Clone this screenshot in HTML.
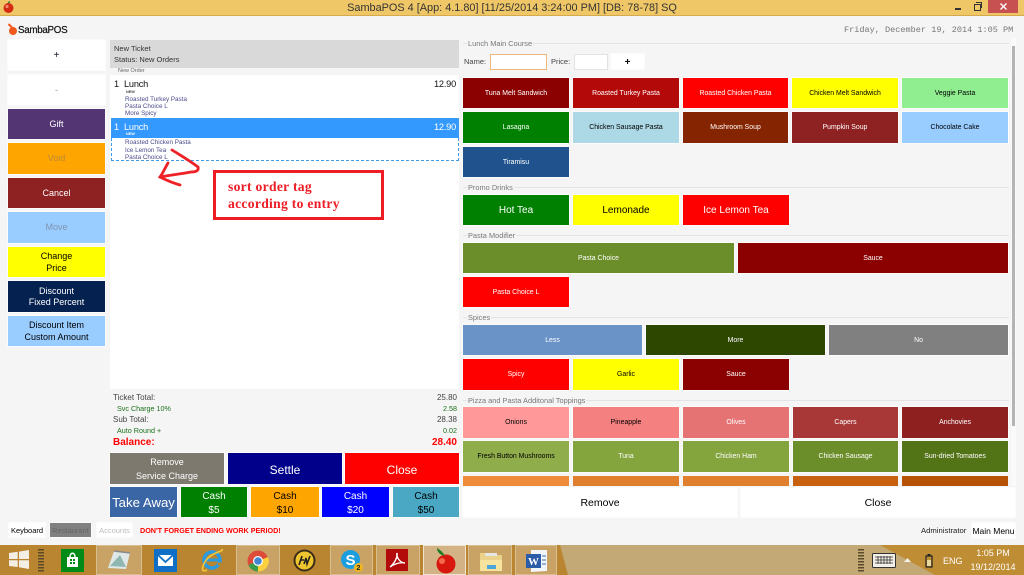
<!DOCTYPE html>
<html><head><meta charset="utf-8">
<style>
html,body{margin:0;padding:0;width:1024px;height:575px;overflow:hidden;background:#f5f5f5;font-family:"Liberation Sans",sans-serif}
.a{position:absolute;white-space:nowrap}
.b{position:absolute;display:flex;align-items:center;justify-content:center;text-align:center;font-size:6.9px;color:#fff;box-sizing:border-box;line-height:1.25;outline:1px solid #fbfbfb;padding-top:2px}
.l{font-size:9px;line-height:11.5px;padding-top:1px}
.m{font-size:10px;padding-top:1px}
.k{color:#000}
.g{position:absolute;height:1px;background:#e4e4e4;left:463px;width:546px}
.h{position:absolute;left:467px;font-size:7.4px;color:#777;background:#f5f5f5;padding:0 1px;white-space:nowrap;line-height:9px}
.t{position:absolute;left:125px;font-size:6.3px;color:#4a4a8c;line-height:8px;white-space:nowrap}
.n{position:absolute;left:126px;font-size:3.8px;font-weight:bold;color:#444;line-height:5px}
.o{font-size:9.2px;line-height:12px;letter-spacing:-.2px;top:78px}
.c{font-size:10px;line-height:13.5px;padding-top:3px}
</style></head><body>

<!-- title bar -->
<div class="a" style="left:0;top:0;width:1024px;height:15px;background:#f0c767;border-bottom:1px solid #d5a94e"></div>
<svg class="a" style="left:2px;top:1px" width="13" height="13" viewBox="0 0 13 13"><circle cx="6.5" cy="7" r="5" fill="#d42a12"/><circle cx="5" cy="5.5" r="1.6" fill="#f58a6a"/><path d="M6 2L8 0.5" stroke="#274" stroke-width="1.2"/></svg>
<div class="a" style="left:0;width:1024px;top:1px;text-align:center;font-size:10.9px;line-height:15px;color:#333">SambaPOS 4 [App: 4.1.80] [11/25/2014 3:24:00 PM] [DB: 78-78] SQ</div>
<div class="a" style="left:955px;top:8px;width:6px;height:2px;background:#333"></div>
<div class="a" style="left:974px;top:4px;width:5px;height:5px;border:1px solid #333"></div>
<div class="a" style="left:976px;top:2px;width:5px;height:5px;border:1px solid #333;border-left:0;border-bottom:0"></div>
<div class="a" style="left:988px;top:0;width:30px;height:13px;background:#c75050"></div>
<svg class="a" style="left:999px;top:2px" width="9" height="9" viewBox="0 0 9 9"><path d="M1.5 1.5L7.5 7.5M7.5 1.5L1.5 7.5" stroke="#fff" stroke-width="1.4"/></svg>

<!-- logo + clock -->
<svg class="a" style="left:7px;top:23px" width="11" height="13" viewBox="0 0 11 13"><circle cx="6" cy="8" r="4" fill="#f0591e"/><path d="M1.5 1L5 4.5" stroke="#f0591e" stroke-width="2"/></svg>
<div class="a" style="left:18px;top:25px;font-size:9.8px;line-height:12px;color:#111;letter-spacing:-.3px;-webkit-text-stroke:.2px #111">SambaPOS</div>
<div class="a" style="left:844px;top:25px;font-family:'Liberation Mono',monospace;font-size:8.55px;line-height:11px;color:#777">Friday, December 19, 2014 1:05 PM</div>

<!-- left buttons -->
<div class="b" style="left:8px;top:40px;width:97px;height:30px;background:#fff;color:#112;font-size:10px;padding-top:3px">+</div>
<div class="b" style="left:8px;top:75px;width:97px;height:30px;background:#fff;color:#999;font-size:9px">-</div>
<div class="b l" style="left:8px;top:109px;width:97px;height:30px;background:#533573">Gift</div>
<div class="b l" style="left:8px;top:143px;width:97px;height:31px;background:#ffa500;color:#b98a3a">Void</div>
<div class="b l" style="left:8px;top:178px;width:97px;height:30px;background:#8e2222">Cancel</div>
<div class="b l" style="left:8px;top:212px;width:97px;height:31px;background:#99ccff;color:#7f94b0">Move</div>
<div class="b l k" style="left:8px;top:247px;width:97px;height:30px;background:#ff0">Change<br>Price</div>
<div class="b l" style="left:8px;top:281px;width:97px;height:31px;background:#04214f">Discount<br>Fixed Percent</div>
<div class="b l k" style="left:8px;top:316px;width:97px;height:30px;background:#99ccff">Discount Item<br>Custom Amount</div>

<!-- ticket header -->
<div class="a" style="left:110px;top:40px;width:349px;height:28px;background:#d9d9d9"></div>
<div class="a" style="left:114px;top:44px;font-size:7.5px;line-height:10.5px;color:#333">New Ticket<br>Status: New Orders</div>
<div class="a" style="left:118px;top:68px;font-size:5.5px;line-height:6px;color:#666">New Order</div>

<!-- ticket list -->
<div class="a" style="left:110px;top:75px;width:349px;height:314px;background:#fff"></div>
<div class="a o" style="left:114px;color:#111">1</div>
<div class="a o" style="left:124px;color:#111">Lunch</div>
<div class="a o" style="right:568px;color:#111">12.90</div>
<div class="n" style="top:90px">NEW</div>
<div class="t" style="top:96px">Roasted Turkey Pasta</div>
<div class="t" style="top:103px">Pasta Choice L</div>
<div class="t" style="top:110px">More Spicy</div>

<div class="a" style="left:111px;top:118px;width:348px;height:20px;background:#3399ff"></div>
<div class="a" style="left:111px;top:118px;width:346px;height:41px;border:1px dashed #3f9be8"></div>
<div class="a o" style="left:114px;top:121px;color:#fff">1</div>
<div class="a o" style="left:124px;top:121px;color:#fff">Lunch</div>
<div class="a o" style="right:568px;top:121px;color:#fff">12.90</div>
<div class="n" style="top:132px;color:#fff">NEW</div>
<div class="t" style="top:139px">Roasted Chicken Pasta</div>
<div class="t" style="top:147px">Ice Lemon Tea</div>
<div class="t" style="top:154px">Pasta Choice L</div>

<!-- annotation -->
<svg class="a" style="left:155px;top:145px" width="50" height="45" viewBox="0 0 50 45"><path d="M17 5C25 10 34 15 43 22C44 25 42 27 36 27C26 29 15 30 5 32" fill="none" stroke="#ee2127" stroke-width="2.8" stroke-linecap="round"/><path d="M13 18C10 23 8 28 5 32C11 35 18 38 25 40" fill="none" stroke="#ee2127" stroke-width="2.8" stroke-linecap="round"/></svg>
<div class="a" style="left:213px;top:170px;width:165px;height:44px;border:3px solid #ee1c25;background:#fff"></div>
<div class="a" style="left:228px;top:179px;font-family:'Liberation Serif',serif;font-weight:bold;font-size:13.6px;line-height:16.7px;color:#ee1c25;letter-spacing:.3px">sort order tag<br>according to entry</div>

<!-- totals -->
<div class="a" style="left:113px;top:393px;font-size:8px;line-height:10px;color:#444">Ticket Total:</div>
<div class="a" style="right:567px;top:393px;font-size:8px;line-height:10px;color:#444">25.80</div>
<div class="a" style="left:117px;top:404px;font-size:7.2px;line-height:10px;color:#1c701c">Svc Charge 10%</div>
<div class="a" style="right:567px;top:404px;font-size:7.2px;line-height:10px;color:#1c701c">2.58</div>
<div class="a" style="left:113px;top:415px;font-size:8px;line-height:10px;color:#444">Sub Total:</div>
<div class="a" style="right:567px;top:415px;font-size:8px;line-height:10px;color:#444">28.38</div>
<div class="a" style="left:117px;top:426px;font-size:7.2px;line-height:10px;color:#1c701c">Auto Round +</div>
<div class="a" style="right:567px;top:426px;font-size:7.2px;line-height:10px;color:#1c701c">0.02</div>
<div class="a" style="left:113px;top:437px;font-size:10px;line-height:12px;font-weight:bold;color:#f00">Balance:</div>
<div class="a" style="right:567px;top:437px;font-size:10px;line-height:12px;font-weight:bold;color:#f00">28.40</div>

<!-- bottom ticket buttons -->
<div class="b" style="left:110px;top:453px;width:114px;height:31px;background:#7d796f;font-size:9px;line-height:13.5px">Remove<br>Service Charge</div>
<div class="b" style="left:228px;top:453px;width:114px;height:31px;background:#00008b;font-size:12px;padding-top:3px">Settle</div>
<div class="b" style="left:345px;top:453px;width:114px;height:31px;background:#f00;font-size:12px;padding-top:3px">Close</div>
<div class="b" style="left:110px;top:487px;width:67px;height:30px;background:#3a66a5;font-size:13.2px;padding-top:3px">Take Away</div>
<div class="b c" style="left:181px;top:487px;width:66px;height:30px;background:#008000">Cash<br>$5</div>
<div class="b k c" style="left:251px;top:487px;width:68px;height:30px;background:#ffa500">Cash<br>$10</div>
<div class="b c" style="left:322px;top:487px;width:67px;height:30px;background:#00f">Cash<br>$20</div>
<div class="b k c" style="left:393px;top:487px;width:66px;height:30px;background:#4aa8c4">Cash<br>$50</div>

<!-- right: Lunch main course -->
<div class="g" style="top:43px"></div><div class="h" style="top:39px">Lunch Main Course</div>
<div class="a" style="left:464px;top:57px;font-size:7.5px;line-height:10px;color:#444">Name:</div>
<div class="a" style="left:490px;top:54px;width:55px;height:14px;background:#fff;border:1px solid #f0b878"></div>
<div class="a" style="left:551px;top:57px;font-size:7.5px;line-height:10px;color:#444">Price:</div>
<div class="a" style="left:574px;top:54px;width:32px;height:14px;background:#fff;border:1px solid #e2e2e2"></div>
<div class="b" style="left:611px;top:54px;width:33px;height:15px;background:#fff;color:#111;font-size:10px;font-weight:bold;padding-top:3px">+</div>

<div class="b" style="left:463px;top:78px;width:106px;height:30px;background:#8b0000">Tuna Melt Sandwich</div>
<div class="b" style="left:573px;top:78px;width:106px;height:30px;background:#b30909">Roasted Turkey Pasta</div>
<div class="b" style="left:683px;top:78px;width:105px;height:30px;background:#f00">Roasted Chicken Pasta</div>
<div class="b k" style="left:792px;top:78px;width:106px;height:30px;background:#ff0">Chicken Melt Sandwich</div>
<div class="b k" style="left:902px;top:78px;width:106px;height:30px;background:#90ee90">Veggie Pasta</div>

<div class="b" style="left:463px;top:112px;width:106px;height:31px;background:#008000">Lasagna</div>
<div class="b k" style="left:573px;top:112px;width:106px;height:31px;background:#add8e6">Chicken Sausage Pasta</div>
<div class="b" style="left:683px;top:112px;width:105px;height:31px;background:#852400">Mushroom Soup</div>
<div class="b" style="left:792px;top:112px;width:106px;height:31px;background:#8e2222">Pumpkin Soup</div>
<div class="b k" style="left:902px;top:112px;width:106px;height:31px;background:#99ccff">Chocolate Cake</div>

<div class="b" style="left:463px;top:147px;width:106px;height:30px;background:#20538e">Tiramisu</div>

<div class="g" style="top:187px"></div><div class="h" style="top:183px">Promo Drinks</div>
<div class="b m" style="left:463px;top:195px;width:106px;height:30px;background:#008000;padding-top:2px">Hot Tea</div>
<div class="b m k" style="left:573px;top:195px;width:106px;height:30px;background:#ff0;padding-top:2px">Lemonade</div>
<div class="b m" style="left:683px;top:195px;width:106px;height:30px;background:#f00;padding-top:2px">Ice Lemon Tea</div>

<div class="g" style="top:235px"></div><div class="h" style="top:231px">Pasta Modifier</div>
<div class="b" style="left:463px;top:243px;width:271px;height:30px;background:#6b8e2a">Pasta Choice</div>
<div class="b" style="left:738px;top:243px;width:270px;height:30px;background:#8b0000">Sauce</div>
<div class="b" style="left:463px;top:277px;width:106px;height:30px;background:#f00">Pasta Choice L</div>

<div class="g" style="top:317px"></div><div class="h" style="top:313px">Spices</div>
<div class="b" style="left:463px;top:325px;width:179px;height:30px;background:#6a93c7">Less</div>
<div class="b" style="left:646px;top:325px;width:179px;height:30px;background:#2d4700">More</div>
<div class="b" style="left:829px;top:325px;width:179px;height:30px;background:#808080">No</div>
<div class="b" style="left:463px;top:359px;width:106px;height:31px;background:#f00">Spicy</div>
<div class="b k" style="left:573px;top:359px;width:106px;height:31px;background:#ff0">Garlic</div>
<div class="b" style="left:683px;top:359px;width:106px;height:31px;background:#8b0000">Sauce</div>

<div class="g" style="top:400px"></div><div class="h" style="top:396px">Pizza and Pasta Additonal Toppings</div>
<div class="b k" style="left:463px;top:407px;width:106px;height:31px;background:#ff9999">Onions</div>
<div class="b k" style="left:573px;top:407px;width:106px;height:31px;background:#f58080">Pineapple</div>
<div class="b" style="left:683px;top:407px;width:106px;height:31px;background:#e57373">Olives</div>
<div class="b" style="left:793px;top:407px;width:105px;height:31px;background:#a83838">Capers</div>
<div class="b" style="left:902px;top:407px;width:106px;height:31px;background:#8e2020">Anchovies</div>

<div class="b k" style="left:463px;top:441px;width:106px;height:31px;background:#8fad4b">Fresh Button Mushrooms</div>
<div class="b" style="left:573px;top:441px;width:106px;height:31px;background:#84a43e">Tuna</div>
<div class="b" style="left:683px;top:441px;width:106px;height:31px;background:#84a43e">Chicken Ham</div>
<div class="b" style="left:793px;top:441px;width:105px;height:31px;background:#6b8e2a">Chicken Sausage</div>
<div class="b" style="left:902px;top:441px;width:106px;height:31px;background:#527316">Sun-dried Tomatoes</div>

<div class="a" style="left:463px;top:476px;width:106px;height:10px;background:#ef8c3c"></div>
<div class="a" style="left:573px;top:476px;width:106px;height:10px;background:#e07f2e"></div>
<div class="a" style="left:683px;top:476px;width:106px;height:10px;background:#e07f2e"></div>
<div class="a" style="left:793px;top:476px;width:105px;height:10px;background:#c8610f"></div>
<div class="a" style="left:902px;top:476px;width:106px;height:10px;background:#b55205"></div>

<!-- scrollbar -->
<div class="a" style="left:1011px;top:38px;width:5px;height:448px;background:#fafafa"></div>
<div class="a" style="left:1012px;top:46px;width:3px;height:380px;background:#b4b4b4"></div>

<div class="b k" style="left:463px;top:488px;width:274px;height:29px;background:#fff;font-size:10.5px;padding-top:3px">Remove</div>
<div class="b k" style="left:741px;top:488px;width:274px;height:29px;background:#fff;font-size:10.5px;padding-top:3px">Close</div>

<!-- status row -->
<div class="b k" style="left:9px;top:523px;width:36px;height:14px;background:#fff;font-size:7.5px">Keyboard</div>
<div class="b" style="left:50px;top:523px;width:41px;height:14px;background:#808080;color:#666;font-size:7.5px">Restaurant</div>
<div class="b" style="left:97px;top:523px;width:35px;height:14px;background:#fff;color:#bbb;font-size:7.5px">Accounts</div>
<div class="a" style="left:140px;top:526px;font-size:7.2px;line-height:10px;font-weight:bold;color:#f00">DON'T FORGET ENDING WORK PERIOD!</div>
<div class="a" style="left:921px;top:526px;font-size:7.7px;line-height:10px;color:#222">Administrator</div>
<div class="b k" style="left:972px;top:523px;width:43px;height:15px;background:#fff;font-size:8.5px">Main Menu</div>

<!-- taskbar -->
<div class="a" style="left:0;top:545px;width:1024px;height:30px;background:#c3a976"></div>
<div class="a" style="left:0;top:545px;width:1024px;height:30px;background:#b98530;clip-path:polygon(0 0,560px 0,568px 100%,0 100%)"></div>
<div class="a" style="left:0;top:545px;width:1024px;height:30px;background:#bf8d34;clip-path:polygon(880px 0,1024px 0,1024px 100%,935px 100%)"></div>
<svg class="a" style="left:9px;top:550px" width="20" height="19" viewBox="0 0 20 19"><path d="M0 3L8.7 1.8V9H0ZM10 1.6L20 0V9H10ZM0 10.2H8.7V17L0 16ZM10 10.2H20V19L10 17.2Z" fill="#f4efe4"/></svg>
<div class="a" style="left:38px;top:549px;width:6px;height:23px;background:repeating-linear-gradient(180deg,#5b4a2a 0 1.5px,transparent 1.5px 3px)"></div>
<div class="a" style="left:97px;top:546px;width:44px;height:28px;background:#c9a265;outline:1px solid #d8bd8e"></div>
<div class="a" style="left:237px;top:546px;width:42px;height:28px;background:#c9a265;outline:1px solid #d8bd8e"></div>
<div class="a" style="left:331px;top:546px;width:41px;height:28px;background:#c9a265;outline:1px solid #d8bd8e"></div>
<div class="a" style="left:377px;top:546px;width:42px;height:28px;background:#c9a265;outline:1px solid #d8bd8e"></div>
<div class="a" style="left:424px;top:546px;width:41px;height:28px;background:#d3b386;outline:1px solid #f0e4d0"></div>
<div class="a" style="left:469px;top:546px;width:42px;height:28px;background:#c9a265;outline:1px solid #d8bd8e"></div>
<div class="a" style="left:516px;top:546px;width:40px;height:28px;background:#c9a265;outline:1px solid #d8bd8e"></div>

<svg class="a" style="left:61px;top:549px" width="24" height="23" viewBox="0 0 24 23"><rect width="23" height="23" fill="#008a17"/><path d="M6 8H17V18H6Z" fill="#fff"/><path d="M9 8C9 3 14 3 14 8" fill="none" stroke="#fff" stroke-width="1.5"/><path d="M9 10H11V12H9ZM12 10H14V12H12ZM9 13H11V15H9ZM12 13H14V15H12Z" fill="#008a17"/></svg>
<svg class="a" style="left:107px;top:549px" width="24" height="24" viewBox="0 0 24 24"><path d="M7 2L23 4L19 20L1 19Z" fill="#dfe8e6"/><path d="M3 17L13 6L19 18Z" fill="#8fb6b0"/><path d="M7 2L23 4" stroke="#888" stroke-width="1.5"/></svg>
<svg class="a" style="left:154px;top:549px" width="23" height="23" viewBox="0 0 23 23"><rect width="23" height="23" fill="#0f6fc6"/><rect x="4" y="6" width="15" height="11" fill="#fff"/><path d="M4 6L11.5 13L19 6" fill="none" stroke="#0f6fc6" stroke-width="1.8"/></svg>
<svg class="a" style="left:200px;top:547px" width="24" height="26" viewBox="0 0 24 26"><ellipse cx="12" cy="13" rx="8" ry="8" fill="none" stroke="#2a9be0" stroke-width="3.6"/><path d="M5 13H20" stroke="#2a9be0" stroke-width="3"/><path d="M18 17L21 17" stroke="#b98530" stroke-width="3"/><path d="M22 2C24 5 14 4 7 12C1 20 1 26 7 23" fill="none" stroke="#f0c53a" stroke-width="1.7"/></svg>
<svg class="a" style="left:247px;top:550px" width="22" height="22" viewBox="0 0 22 22"><circle cx="11" cy="11" r="10.5" fill="#dd4b39"/><path d="M11 11L1.5 15A10.5 10.5 0 0 0 11 21.5Z" fill="#3a9d4a"/><path d="M11 11V21.5A10.5 10.5 0 0 0 21 7Z" fill="#fbd13e"/><circle cx="11" cy="11" r="5" fill="#fff"/><circle cx="11" cy="11" r="3.8" fill="#4285d0"/></svg>
<svg class="a" style="left:293px;top:549px" width="23" height="23" viewBox="0 0 23 23"><circle cx="11.5" cy="11.5" r="11" fill="#3a2e18"/><circle cx="11.5" cy="11.5" r="9" fill="#eec52e"/><path d="M6 16L9 7M7 11H11M11 15L13 9L14 15L17 7" fill="none" stroke="#222" stroke-width="1.6"/></svg>
<svg class="a" style="left:340px;top:549px" width="24" height="24" viewBox="0 0 24 24"><circle cx="10.5" cy="10.5" r="9.5" fill="#1a9ee0"/><text x="10.5" y="16" font-size="15" font-weight="bold" font-family="Liberation Sans" text-anchor="middle" fill="#fff">S</text><circle cx="18.5" cy="18.5" r="4.5" fill="#f0b820"/><text x="18.5" y="21" font-size="7" font-weight="bold" font-family="Liberation Sans" text-anchor="middle" fill="#222">2</text></svg>
<svg class="a" style="left:386px;top:549px" width="23" height="23" viewBox="0 0 23 23"><rect width="22" height="22" fill="#b30b0b"/><path d="M4 18C8 15 12 8 11 4C10 8 14 14 19 14C14 13 8 15 4 18Z" fill="none" stroke="#fff" stroke-width="1.4"/></svg>
<svg class="a" style="left:432px;top:547px" width="26" height="27" viewBox="0 0 26 27"><ellipse cx="14" cy="17" rx="9.5" ry="9.5" fill="#d8170f"/><circle cx="10" cy="14" r="3" fill="#f56a4a"/><path d="M13 9C10 4 8 3 5 1C5 5 8 8 13 9Z" fill="#1f7a22"/></svg>
<svg class="a" style="left:479px;top:550px" width="24" height="22" viewBox="0 0 24 22"><path d="M1 3H9L11 5H23V12H1Z" fill="#ead28a"/><path d="M1 10H23V21H1Z" fill="#f5e39e"/><rect x="8" y="15" width="9" height="4" fill="#4aa6d8"/><rect x="6" y="3" width="12" height="3" fill="#e6e6e6"/></svg>
<svg class="a" style="left:525px;top:549px" width="24" height="24" viewBox="0 0 24 24"><path d="M6 1H22V22L6 23Z" fill="#f2f6fb"/><rect x="1" y="5" width="15" height="14" fill="#2a5ca8"/><text x="8.5" y="16" font-size="11" font-weight="bold" font-family="Liberation Serif" text-anchor="middle" fill="#fff">W</text><path d="M17 7H21M17 11H21M17 15H21" stroke="#3468b4"/></svg>

<!-- tray -->
<div class="a" style="left:858px;top:549px;width:6px;height:23px;background:repeating-linear-gradient(180deg,#5b4a2a 0 1.5px,transparent 1.5px 3px)"></div>
<svg class="a" style="left:872px;top:553px" width="24" height="15" viewBox="0 0 24 15"><rect x=".5" y=".5" width="23" height="14" rx="1" fill="#f3efe6" stroke="#333"/><path d="M3 4H21M3 7H21M3 10H21M6 3V11M9 3V11M12 3V11M15 3V11M18 3V11" stroke="#333" stroke-width=".8"/></svg>
<svg class="a" style="left:904px;top:558px" width="7" height="5" viewBox="0 0 7 5"><path d="M3.5 0L7 4H0Z" fill="#f5f0e6"/></svg>
<svg class="a" style="left:925px;top:554px" width="8" height="14" viewBox="0 0 8 14"><rect x="1" y="2" width="6" height="11" fill="none" stroke="#222" stroke-width="1.2"/><rect x="2.5" y="0" width="3" height="2" fill="#222"/><rect x="2" y="6" width="4" height="6" fill="#e8d8a0"/></svg>
<div class="a" style="left:943px;top:555px;font-size:9px;line-height:12px;color:#fff">ENG</div>
<div class="a" style="left:969px;top:547px;width:48px;text-align:center;font-size:9px;line-height:13.5px;color:#fff">1:05 PM<br>19/12/2014</div>

</body></html>
